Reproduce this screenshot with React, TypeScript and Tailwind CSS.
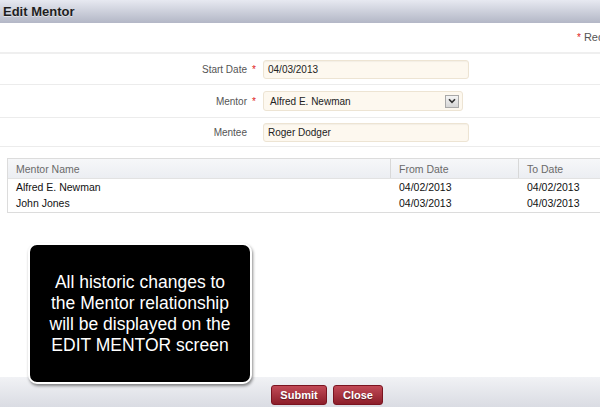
import React from "react";

const Chevron = () => (
  <svg width="8" height="6" viewBox="0 0 8 6">
    <path d="M1 1.2 L4 4.3 L7 1.2" fill="none" stroke="#333" strokeWidth="1.6" />
  </svg>
);

export default function App() {
  const rows = [
    { name: "Alfred E. Newman", from: "04/02/2013", to: "04/02/2013" },
    { name: "John Jones", from: "04/03/2013", to: "04/03/2013" },
  ];
  return (
    <div className="relative w-[600px] h-[407px] overflow-hidden bg-white flex flex-col font-['Liberation_Sans',Arial,sans-serif]">
      <div className="h-[23px] shrink-0 bg-gradient-to-b from-[#e7e9f1] to-[#b3b7c6] px-[3px] text-[13px] font-bold leading-[23px] text-[#1e1e1e] [text-shadow:0_1px_0_rgba(255,255,255,0.5)]">
        Edit Mentor
      </div>
      <div className="h-[31px] shrink-0 border-b-2 border-[#efefef] flex items-center pl-[577px] whitespace-nowrap text-[11px] text-[#555]">
        <span className="text-[#e02020] mr-[3px] text-[10px]">*</span>
        <span>Required</span>
      </div>

      <div className="h-[31px] shrink-0 border-b border-[#ececec] flex items-center">
        <div className="w-[247px] text-right text-[10px] text-[#555]">Start Date</div>
        <div className="w-[16px] pl-[5px] text-[10px] text-[#e02020]">*</div>
        <div className="w-[206px] h-[19px] rounded-[3px] border border-[#ede4d3] bg-[#fdf8ef] px-[4px] text-[10px] leading-[17px] text-[#222] shadow-[inset_0_1px_1px_rgba(0,0,0,0.04)]">
          04/03/2013
        </div>
      </div>
      <div className="h-[33px] shrink-0 border-b border-[#ececec] flex items-center">
        <div className="w-[247px] text-right text-[10px] text-[#555]">Mentor</div>
        <div className="w-[16px] pl-[5px] text-[10px] text-[#e02020]">*</div>
        <div className="w-[200px] h-[20px] rounded-[3px] border border-[#ede4d3] bg-[#fdf8ef] pl-[6px] pr-[3px] flex items-center justify-between text-[10px] text-[#222]">
          <span>Alfred E. Newman</span>
          <span className="w-[14px] h-[13px] border border-[#a8a8a8] bg-gradient-to-b from-[#f4f4f4] to-[#d6d6d6] flex items-center justify-center">
            <Chevron />
          </span>
        </div>
      </div>
      <div className="h-[29px] shrink-0 border-b border-[#ececec] flex items-center">
        <div className="w-[247px] text-right text-[10px] text-[#555]">Mentee</div>
        <div className="w-[16px]" />
        <div className="w-[206px] h-[19px] rounded-[3px] border border-[#ede4d3] bg-[#fdf8ef] px-[4px] text-[10px] leading-[17px] text-[#222] shadow-[inset_0_1px_1px_rgba(0,0,0,0.04)]">
          Roger Dodger
        </div>
      </div>

      <div className="mt-[11px] ml-[7px] w-[640px] shrink-0 border border-[#dcdcdc] text-[10.5px]">
        <div className="h-[20px] flex bg-gradient-to-b from-[#f6f7f9] to-[#eceef2] border-b border-[#e2e2e2] text-[#6a6a6a]">
          <div className="w-[383px] pl-[8px] leading-[20px] border-r border-[#d8d8d8]">Mentor Name</div>
          <div className="w-[128px] pl-[8px] leading-[20px] border-r border-[#d8d8d8]">From Date</div>
          <div className="flex-1 pl-[8px] leading-[20px]">To Date</div>
        </div>
        {rows.map((r) => (
          <div key={r.name} className="h-[16px] flex text-[#111] leading-[16px]">
            <div className="w-[383px] pl-[8px]">{r.name}</div>
            <div className="w-[128px] pl-[8px]">{r.from}</div>
            <div className="flex-1 pl-[8px]">{r.to}</div>
          </div>
        ))}
        <div className="h-[1px]" />
      </div>

      <div className="mt-auto h-[30px] shrink-0 bg-gradient-to-b from-[#f1f2f5] to-[#dadce3] flex items-start pt-[8px] pl-[271px] gap-[6px]">
        <button className="h-[20px] w-[56px] rounded-[3px] border border-[#7a1420] bg-gradient-to-b from-[#c24a57] to-[#8c1d2a] text-[11px] font-bold text-white [text-shadow:0_1px_1px_rgba(0,0,0,0.4)]">
          Submit
        </button>
        <button className="h-[20px] w-[50px] rounded-[3px] border border-[#7a1420] bg-gradient-to-b from-[#c24a57] to-[#8c1d2a] text-[11px] font-bold text-white [text-shadow:0_1px_1px_rgba(0,0,0,0.4)]">
          Close
        </button>
      </div>

      <div className="absolute left-[28px] top-[243px] w-[224px] h-[141px] rounded-[9px] border-2 border-white bg-black shadow-[1px_2px_3px_rgba(0,0,0,0.45)] flex items-center justify-center text-center text-[17.5px] leading-[21px] text-white">
        <div>
          All historic changes to
          <br />
          the Mentor relationship
          <br />
          will be displayed on the
          <br />
          EDIT MENTOR screen
        </div>
      </div>
    </div>
  );
}
